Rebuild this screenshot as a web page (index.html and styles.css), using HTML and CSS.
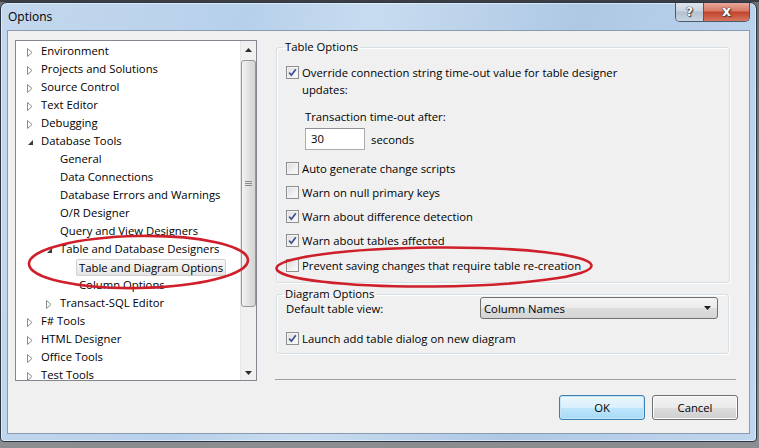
FILE: index.html
```html
<!DOCTYPE html>
<html>
<head>
<meta charset="utf-8">
<title>Options</title>
<link rel="stylesheet" href="styles.css">
</head>
<body>
<div class="window">
  <div class="titlebar">
    <span class="title">Options</span>
    <div class="caption-btns">
      <div class="cap help"><span class="glyph">?</span></div>
      <div class="cap close"><span class="glyph">x</span></div>
    </div>
  </div>
  <div class="client">
    <div class="main">
      <div class="tree">
        <ul class="items">
          <li class="row l0"><span class="exp"><svg width="6" height="9" viewBox="0 0 6 9"><path d="M0.5 0.5 L5 4.5 L0.5 8.5 Z" fill="#fff" stroke="#8c8c8c"/></svg></span><span class="lbl">Environment</span></li>
          <li class="row l0"><span class="exp"><svg width="6" height="9" viewBox="0 0 6 9"><path d="M0.5 0.5 L5 4.5 L0.5 8.5 Z" fill="#fff" stroke="#8c8c8c"/></svg></span><span class="lbl">Projects and Solutions</span></li>
          <li class="row l0"><span class="exp"><svg width="6" height="9" viewBox="0 0 6 9"><path d="M0.5 0.5 L5 4.5 L0.5 8.5 Z" fill="#fff" stroke="#8c8c8c"/></svg></span><span class="lbl">Source Control</span></li>
          <li class="row l0"><span class="exp"><svg width="6" height="9" viewBox="0 0 6 9"><path d="M0.5 0.5 L5 4.5 L0.5 8.5 Z" fill="#fff" stroke="#8c8c8c"/></svg></span><span class="lbl">Text Editor</span></li>
          <li class="row l0"><span class="exp"><svg width="6" height="9" viewBox="0 0 6 9"><path d="M0.5 0.5 L5 4.5 L0.5 8.5 Z" fill="#fff" stroke="#8c8c8c"/></svg></span><span class="lbl">Debugging</span></li>
          <li class="row l0"><span class="exp"><svg width="7" height="9" viewBox="0 0 7 9"><path d="M6 2 L6 7 L1 7 Z" fill="#3a3a3a"/></svg></span><span class="lbl">Database Tools</span></li>
          <li class="row l1"><span class="exp"></span><span class="lbl">General</span></li>
          <li class="row l1"><span class="exp"></span><span class="lbl">Data Connections</span></li>
          <li class="row l1"><span class="exp"></span><span class="lbl">Database Errors and Warnings</span></li>
          <li class="row l1"><span class="exp"></span><span class="lbl">O/R Designer</span></li>
          <li class="row l1"><span class="exp"></span><span class="lbl">Query and View Designers</span></li>
          <li class="row l1"><span class="exp"><svg width="7" height="9" viewBox="0 0 7 9"><path d="M6 2 L6 7 L1 7 Z" fill="#3a3a3a"/></svg></span><span class="lbl">Table and Database Designers</span></li>
          <li class="row l2"><span class="exp"></span><span class="lbl selected">Table and Diagram Options</span></li>
          <li class="row l2"><span class="exp"></span><span class="lbl">Column Options</span></li>
          <li class="row l1"><span class="exp"><svg width="6" height="9" viewBox="0 0 6 9"><path d="M0.5 0.5 L5 4.5 L0.5 8.5 Z" fill="#fff" stroke="#8c8c8c"/></svg></span><span class="lbl">Transact-SQL Editor</span></li>
          <li class="row l0"><span class="exp"><svg width="6" height="9" viewBox="0 0 6 9"><path d="M0.5 0.5 L5 4.5 L0.5 8.5 Z" fill="#fff" stroke="#8c8c8c"/></svg></span><span class="lbl">F# Tools</span></li>
          <li class="row l0"><span class="exp"><svg width="6" height="9" viewBox="0 0 6 9"><path d="M0.5 0.5 L5 4.5 L0.5 8.5 Z" fill="#fff" stroke="#8c8c8c"/></svg></span><span class="lbl">HTML Designer</span></li>
          <li class="row l0"><span class="exp"><svg width="6" height="9" viewBox="0 0 6 9"><path d="M0.5 0.5 L5 4.5 L0.5 8.5 Z" fill="#fff" stroke="#8c8c8c"/></svg></span><span class="lbl">Office Tools</span></li>
          <li class="row l0"><span class="exp"><svg width="6" height="9" viewBox="0 0 6 9"><path d="M0.5 0.5 L5 4.5 L0.5 8.5 Z" fill="#fff" stroke="#8c8c8c"/></svg></span><span class="lbl">Test Tools</span></li>
        </ul>
        <div class="vscroll">
          <div class="sbtn up"><svg width="7" height="4" viewBox="0 0 7 4"><path d="M0 4 L3.5 0 L7 4 Z" fill="#2b2b2b"/></svg></div>
          <div class="thumb"><svg width="7" height="7" viewBox="0 0 7 7"><path d="M0 1.5 H7 M0 3.5 H7 M0 5.5 H7" stroke="#8a8a8a" stroke-width="1"/></svg></div>
          <div class="track"></div>
          <div class="sbtn down"><svg width="7" height="4" viewBox="0 0 7 4"><path d="M0 0 L3.5 4 L7 0 Z" fill="#2b2b2b"/></svg></div>
        </div>
      </div>
      <div class="page">
        <fieldset class="group table-opts">
          <legend>Table Options</legend>
          <div class="check first">
            <span class="cb on"><svg width="9" height="9" viewBox="0 0 9 9"><path d="M1.2 4.6 L3.4 7.2 L7.8 1.2" fill="none" stroke="#3d4f8f" stroke-width="1.7"/></svg></span>
            <span class="text">Override connection string time-out value for table designer<br>updates:</span>
          </div>
          <div class="sub-label">Transaction time-out after:</div>
          <div class="timeout-row">
            <div class="textbox">30</div>
            <span>seconds</span>
          </div>
          <div class="check gap10">
            <span class="cb"></span>
            <span class="text">Auto generate change scripts</span>
          </div>
          <div class="check">
            <span class="cb"></span>
            <span class="text">Warn on null primary keys</span>
          </div>
          <div class="check">
            <span class="cb on"><svg width="9" height="9" viewBox="0 0 9 9"><path d="M1.2 4.6 L3.4 7.2 L7.8 1.2" fill="none" stroke="#3d4f8f" stroke-width="1.7"/></svg></span>
            <span class="text">Warn about difference detection</span>
          </div>
          <div class="check">
            <span class="cb on"><svg width="9" height="9" viewBox="0 0 9 9"><path d="M1.2 4.6 L3.4 7.2 L7.8 1.2" fill="none" stroke="#3d4f8f" stroke-width="1.7"/></svg></span>
            <span class="text">Warn about tables affected</span>
          </div>
          <div class="check last">
            <span class="cb"></span>
            <span class="text">Prevent saving changes that require table re-creation</span>
          </div>
        </fieldset>
        <fieldset class="group diagram-opts">
          <legend>Diagram Options</legend>
          <div class="view-row">
            <span class="view-label">Default table view:</span>
            <div class="combo"><span>Column Names</span><svg width="7" height="4" viewBox="0 0 7 4"><path d="M0 0 L7 0 L3.5 4 Z" fill="#1e1e1e"/></svg></div>
          </div>
          <div class="check gap11">
            <span class="cb on"><svg width="9" height="9" viewBox="0 0 9 9"><path d="M1.2 4.6 L3.4 7.2 L7.8 1.2" fill="none" stroke="#3d4f8f" stroke-width="1.7"/></svg></span>
            <span class="text">Launch add table dialog on new diagram</span>
          </div>
        </fieldset>
        <div class="sep"></div>
      </div>
    </div>
    <div class="buttons">
      <div class="btn default">OK</div>
      <div class="btn">Cancel</div>
    </div>
  </div>
</div>
<svg class="annot" width="759" height="448" viewBox="0 0 759 448">
  <ellipse cx="138.5" cy="262" rx="109.5" ry="26" fill="none" stroke="#cf1f2b" stroke-width="2.6" transform="rotate(-1 138.5 262)"/>
  <ellipse cx="434" cy="267" rx="157.5" ry="19.5" fill="none" stroke="#cf1f2b" stroke-width="2.6" transform="rotate(-0.5 434 267)"/>
</svg>
</body>
</html>
```

FILE: styles.css
```css
* { box-sizing: border-box; }
html, body { margin: 0; padding: 0; }
body {
  width: 759px;
  height: 448px;
  overflow: hidden;
  position: relative;
  background: linear-gradient(180deg, #3b3f45 0px, #3b3f45 2px, #6d6f72 2px, #8b8d90 100%);
  font-family: "Open Sans", "Noto Sans", sans-serif;
  font-size: 11.3px;
  color: #000;
}

.window {
  margin-top: 2px;
  width: 757px;
  height: 440px;
  border: 1px solid #2c3644;
  border-radius: 7px 7px 4px 4px;
  background: linear-gradient(100deg, #c3d8ee 0%, #b7d0ea 30%, #c8dcf0 45%, #aec8e4 70%, #c0d6ee 100%);
  display: flex;
  flex-direction: column;
  box-shadow: inset 0 0 0 1px rgba(255,255,255,0.5);
}

.titlebar {
  height: 27px;
  display: flex;
  align-items: flex-start;
  padding-left: 7px;
}
.title {
  font-size: 12px;
  line-height: 14px;
  margin-top: 7px;
  color: #000;
}
.caption-btns {
  margin-left: auto;
  margin-right: 6px;
  display: flex;
  height: 19px;
  border: 1px solid #4d5a6b;
  border-top: none;
  border-radius: 0 0 5px 5px;
  overflow: hidden;
}
.cap {
  height: 100%;
  display: flex;
  align-items: center;
  justify-content: center;
}
.cap .glyph {
  color: #fff;
  font-family: "DejaVu Sans", sans-serif;
  font-weight: bold;
  text-shadow: 0 0 1px #222, 0 0 1px #222, 1px 1px 1px #444;
}
.help {
  width: 28px;
  background: linear-gradient(180deg, #dfe6ee 0%, #c9d3de 45%, #b3c1d0 50%, #c8d4e1 100%);
  border-right: 1px solid #4d5a6b;
}
.help .glyph { font-size: 12px; }
.close {
  width: 45px;
  background: linear-gradient(180deg, #e9a99b 0%, #d67864 45%, #c2422b 50%, #d6765e 100%);
}
.close .glyph { font-size: 14px; margin-top: -2px; }

.client {
  margin: 0 6px;
  height: 404px;
  background: #f0f0f0;
  border: 1px solid #8a9bb0;
  padding: 9px 11px 0 7px;
  display: flex;
  flex-direction: column;
}

.main {
  display: flex;
  height: 341px;
}

/* ---------- tree ---------- */
.tree {
  width: 242px;
  height: 341px;
  border: 1px solid #828790;
  background: #fff;
  display: flex;
  overflow: hidden;
}
.items {
  list-style: none;
  margin: 0;
  padding: 1px 0 0 0;
  flex: 1;
  overflow: hidden;
}
.row {
  height: 18px;
  display: flex;
  align-items: center;
  white-space: nowrap;
  padding-left: 11px;
}
.row.l1 { padding-left: 30px; }
.row.l2 { padding-left: 49px; }
.exp {
  width: 14px;
  height: 18px;
  display: flex;
  align-items: center;
  padding-top: 2px;
  flex: none;
}
.lbl {
  line-height: 16px;
}
.lbl.selected {
  margin-left: -3px;
  padding: 0 2px;
  border: 1px solid #d0d0d0;
  border-radius: 2px;
  background: linear-gradient(180deg, #f8f8f8, #e5e5e5);
  height: 17px;
}

.vscroll {
  width: 16px;
  flex: none;
  background: #f0f0f0;
  border-left: 1px solid #e6e6e6;
  display: flex;
  flex-direction: column;
}
.sbtn {
  height: 18px;
  display: flex;
  align-items: center;
  justify-content: center;
  flex: none;
}
.thumb {
  margin: 1px 0 0 0;
  height: 247px;
  border: 1px solid #979797;
  border-radius: 3px;
  background: linear-gradient(90deg, #f3f3f3, #e2e2e2 50%, #d4d4d4);
  display: flex;
  align-items: center;
  justify-content: center;
  flex: none;
}
.track { flex: 1; }
.sbtn.down { padding-top: 3px; }

/* ---------- page ---------- */
.page {
  margin-left: 18px;
  width: 461px;
  height: 341px;
  display: flex;
  flex-direction: column;
}
.group {
  margin: 0 0 0 1px;
  width: 454px;
  padding: 0 0 0 9px;
  border: 1px solid #d5dfe5;
  border-radius: 3px;
  box-shadow: inset 1px 1px 0 #fff, 1px 1px 0 #fff;
  min-width: 0;
}
.group legend {
  padding: 0 2px;
  margin-left: -3px;
  line-height: 14px;
}
.table-opts { padding-bottom: 8px; }
.diagram-opts {
  margin-top: 5px;
  padding-bottom: 6px;
  width: 453px;
}
.diagram-opts legend {
  line-height: 12px;
}

.check {
  display: flex;
  align-items: flex-start;
  line-height: 17px;
  margin-top: 7px;
}
.check.first { margin-top: 10px; }
.check.gap10 { margin-top: 10px; }
.check.gap11 { margin-top: 11px; }
.check.last { margin-top: 8px; }
.cb {
  width: 13px;
  height: 13px;
  flex: none;
  margin-top: 2px;
  margin-right: 3px;
  border: 1px solid #8e8f8f;
  background: linear-gradient(135deg, #dcdcdc, #f4f4f4 70%, #fafafa);
  box-shadow: inset 0 0 0 1px #f4f4f4;
  display: flex;
  align-items: center;
  justify-content: center;
}
.sub-label {
  margin: 10px 0 0 19px;
  line-height: 17px;
}
.timeout-row {
  margin: 3px 0 0 19px;
  display: flex;
  align-items: center;
  gap: 6px;
}
.textbox {
  width: 60px;
  height: 22px;
  background: #fff;
  border: 1px solid #abadb3;
  border-top-color: #8e9095;
  padding-left: 5px;
  line-height: 20px;
}

.view-row {
  margin-top: -3px;
  display: grid;
  grid-template-columns: 194px 238px;
  align-items: center;
  height: 22px;
}
.view-label {
  line-height: 14px;
  padding-top: 1px;
}
.combo {
  height: 22px;
  border: 1px solid #707070;
  border-radius: 3px;
  background: linear-gradient(180deg, #f4f4f4 0%, #ebebeb 50%, #dddddd 51%, #d4d4d4 100%);
  display: flex;
  align-items: center;
  justify-content: space-between;
  padding: 0 6px 0 3px;
}

.sep {
  margin-top: auto;
  height: 1px;
  background: #a0a0a0;
  margin-bottom: 1px;
}

/* ---------- buttons ---------- */
.buttons {
  margin-top: 14px;
  display: flex;
  justify-content: flex-end;
  gap: 7px;
}
.btn {
  width: 86px;
  height: 25px;
  border: 1px solid #707070;
  border-radius: 3px;
  background: linear-gradient(180deg, #f2f2f2 0%, #ebebeb 50%, #dddddd 51%, #cfcfcf 100%);
  box-shadow: inset 0 0 0 1px #fcfcfc;
  display: flex;
  align-items: center;
  justify-content: center;
}
.btn.default {
  border-color: #3c7fb1;
  background: linear-gradient(180deg, #eaf6fd 0%, #d9f0fc 50%, #bee6fd 51%, #a7d9f5 100%);
  box-shadow: inset 0 0 0 1px #c5e4f7;
}

.annot {
  position: absolute;
  left: 0;
  top: 0;
  pointer-events: none;
}
```
